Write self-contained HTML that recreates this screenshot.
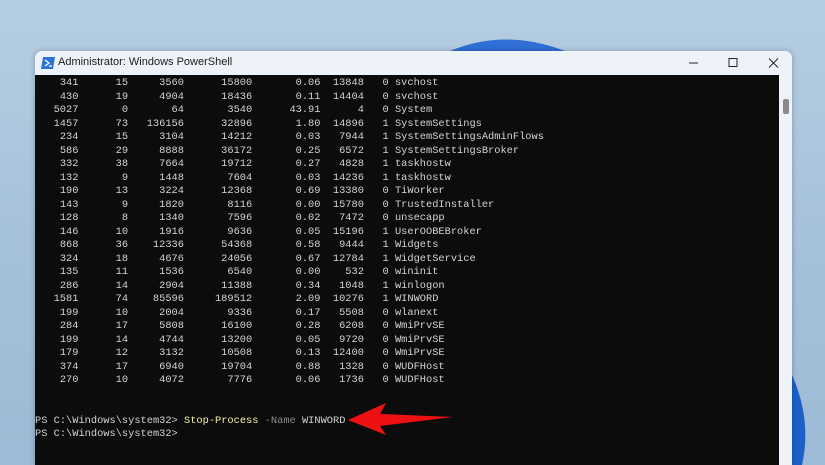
<!DOCTYPE html>
<html style="overflow:hidden"><head><meta charset="utf-8"><style>
html,body{margin:0;width:825px;height:465px;overflow:hidden}
body{position:relative;background:linear-gradient(180deg,#b5cde2 0%,#a6c2da 50%,#9dbad6 100%);font-family:"Liberation Sans",sans-serif}
.win{position:absolute;left:35px;top:51px;width:757px;height:414px;overflow:hidden;background:#eef3f9;border-radius:7px 7px 0 0;box-shadow:0 0 6px rgba(0,0,0,.25)}
.title{position:absolute;left:23px;top:5px;font-size:11px;color:#1c1c1c}
.term{position:absolute;left:0;top:24px;width:744px;height:390px;background:#0c0c0c}
.sb{position:absolute;left:748px;top:48px;width:6px;height:15px;background:#8a8a8a;border-radius:2px}
.rows{position:absolute;left:0;top:2px;font-family:"Liberation Mono",monospace;font-size:10.35px;color:#d4d4d4;line-height:13.5px}
.r{display:grid;grid-template-columns:7ch 8ch 9ch 11ch 11ch 7ch 4ch auto;white-space:pre;height:13.5px}
.r span{text-align:right}.r span:last-child{text-align:left;padding-left:1ch}
.p{white-space:pre;height:13.5px}
</style></head><body>
<svg style="position:absolute;left:0;top:0" width="825" height="465"><path d="M450 51 Q505 28 565 51Z" fill="#2f6fd6"/><path d="M792 375 Q812 420 802 465 L792 465Z" fill="#1d5fc8"/></svg>
<div class="win">
<svg style="position:absolute;left:6px;top:6px" width="14" height="12"><path d="M2 0H14L12 12H0Z" fill="#2b74d6"/><path d="M4 3L8 6L4 9" stroke="#fff" fill="none" stroke-width="1.3"/><path d="M8 9H11" stroke="#fff" stroke-width="1.3"/></svg>
<div class="title">Administrator: Windows PowerShell</div>
<svg style="position:absolute;left:650px;top:5px" width="100" height="14"><path d="M4 7H13" stroke="#222"/><path d="M44 2.5H52V10.5H44Z" stroke="#222" fill="none"/><path d="M84 2.5L93 11.5M93 2.5L84 11.5" stroke="#222"/></svg>
<div class="term"><div class="rows">
<div class="r"><span>341</span><span>15</span><span>3560</span><span>15800</span><span>0.06</span><span>13848</span><span>0</span><span>svchost</span></div>
<div class="r"><span>430</span><span>19</span><span>4904</span><span>18436</span><span>0.11</span><span>14404</span><span>0</span><span>svchost</span></div>
<div class="r"><span>5027</span><span>0</span><span>64</span><span>3540</span><span>43.91</span><span>4</span><span>0</span><span>System</span></div>
<div class="r"><span>1457</span><span>73</span><span>136156</span><span>32896</span><span>1.80</span><span>14896</span><span>1</span><span>SystemSettings</span></div>
<div class="r"><span>234</span><span>15</span><span>3104</span><span>14212</span><span>0.03</span><span>7944</span><span>1</span><span>SystemSettingsAdminFlows</span></div>
<div class="r"><span>586</span><span>29</span><span>8888</span><span>36172</span><span>0.25</span><span>6572</span><span>1</span><span>SystemSettingsBroker</span></div>
<div class="r"><span>332</span><span>38</span><span>7664</span><span>19712</span><span>0.27</span><span>4828</span><span>1</span><span>taskhostw</span></div>
<div class="r"><span>132</span><span>9</span><span>1448</span><span>7604</span><span>0.03</span><span>14236</span><span>1</span><span>taskhostw</span></div>
<div class="r"><span>190</span><span>13</span><span>3224</span><span>12368</span><span>0.69</span><span>13380</span><span>0</span><span>TiWorker</span></div>
<div class="r"><span>143</span><span>9</span><span>1820</span><span>8116</span><span>0.00</span><span>15780</span><span>0</span><span>TrustedInstaller</span></div>
<div class="r"><span>128</span><span>8</span><span>1340</span><span>7596</span><span>0.02</span><span>7472</span><span>0</span><span>unsecapp</span></div>
<div class="r"><span>146</span><span>10</span><span>1916</span><span>9636</span><span>0.05</span><span>15196</span><span>1</span><span>UserOOBEBroker</span></div>
<div class="r"><span>868</span><span>36</span><span>12336</span><span>54368</span><span>0.58</span><span>9444</span><span>1</span><span>Widgets</span></div>
<div class="r"><span>324</span><span>18</span><span>4676</span><span>24056</span><span>0.67</span><span>12784</span><span>1</span><span>WidgetService</span></div>
<div class="r"><span>135</span><span>11</span><span>1536</span><span>6540</span><span>0.00</span><span>532</span><span>0</span><span>wininit</span></div>
<div class="r"><span>286</span><span>14</span><span>2904</span><span>11388</span><span>0.34</span><span>1048</span><span>1</span><span>winlogon</span></div>
<div class="r"><span>1581</span><span>74</span><span>85596</span><span>189512</span><span>2.09</span><span>10276</span><span>1</span><span>WINWORD</span></div>
<div class="r"><span>199</span><span>10</span><span>2004</span><span>9336</span><span>0.17</span><span>5508</span><span>0</span><span>wlanext</span></div>
<div class="r"><span>284</span><span>17</span><span>5808</span><span>16100</span><span>0.28</span><span>6208</span><span>0</span><span>WmiPrvSE</span></div>
<div class="r"><span>199</span><span>14</span><span>4744</span><span>13200</span><span>0.05</span><span>9720</span><span>0</span><span>WmiPrvSE</span></div>
<div class="r"><span>179</span><span>12</span><span>3132</span><span>10508</span><span>0.13</span><span>12400</span><span>0</span><span>WmiPrvSE</span></div>
<div class="r"><span>374</span><span>17</span><span>6940</span><span>19704</span><span>0.88</span><span>1328</span><span>0</span><span>WUDFHost</span></div>
<div class="r"><span>270</span><span>10</span><span>4072</span><span>7776</span><span>0.06</span><span>1736</span><span>0</span><span>WUDFHost</span></div>
<div class="p"> </div><div class="p"> </div>
<div class="p">PS C:\Windows\system32&gt; <span style="color:#f9f1a5">Stop-Process</span> <span style="color:#8a8a8a">-Name</span> WINWORD</div>
<div class="p">PS C:\Windows\system32&gt;</div>
</div></div>
<div class="sb"></div>
</div>
<svg style="position:absolute;left:0;top:0" width="825" height="465"><path d="M348 420 L386 403 L380 414 L453 417 L380 426 L386 435 Z" fill="#ee1111"/></svg>
</body></html>
